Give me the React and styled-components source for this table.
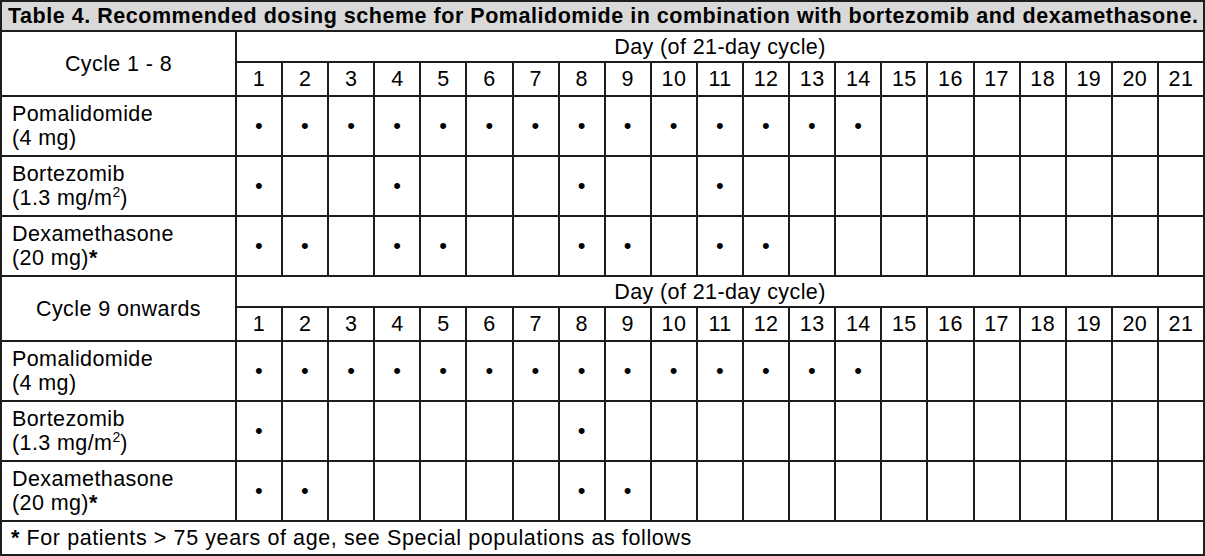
import React from "react";
import styled, { createGlobalStyle } from "styled-components";

const Global = createGlobalStyle`
  html, body { margin: 0; padding: 0; background: #fff; }
  body { font-family: "Liberation Sans", Arial, sans-serif; color: #000; }
`;

const Table = styled.table`
  width: 1205px;
  border-collapse: collapse;
  table-layout: fixed;
  font-size: 21.5px;
  line-height: 24px;
  letter-spacing: 0.4px;
`;

const TitleCell = styled.th`
  background: #d9d9d9;
  border: 2px solid #1e1e1e;
  font-weight: bold;
  text-align: left;
  padding: 0 6px;
  height: 28px;
  font-size: 21.5px;
  letter-spacing: 0.53px;
  white-space: nowrap;
`;

const Cell = styled.td`
  border: 2px solid #1e1e1e;
  padding: 0;
  text-align: center;
  vertical-align: middle;
  height: ${(p) => p.$h || 30}px;
  white-space: nowrap;
`;

const CycleCell = styled(Cell)`
  text-align: center;
`;

const DrugCell = styled(Cell)`
  text-align: left;
  padding: 0 10px;
`;

const FootCell = styled(Cell)`
  text-align: left;
  padding: 0 9px;
  letter-spacing: 0.6px;
`;

const Sup = styled.sup`
  font-size: 14px;
  line-height: 0;
  vertical-align: 8px;
  letter-spacing: 0;
`;

const Star = styled.span`
  font-weight: bold;
`;

const Dot = styled.span`
  font-size: 22px;
`;

const days = Array.from({ length: 21 }, (_, i) => i + 1);

const section1 = [
  { name: "Pomalidomide", dose: "(4 mg)", days: [1,2,3,4,5,6,7,8,9,10,11,12,13,14] },
  { name: "Bortezomib", dose: <>(1.3 mg/m<Sup>2</Sup>)</>, days: [1,4,8,11] },
  { name: "Dexamethasone", dose: <>(20 mg)<Star>*</Star></>, days: [1,2,4,5,8,9,11,12] },
];
const section2 = [
  { name: "Pomalidomide", dose: "(4 mg)", days: [1,2,3,4,5,6,7,8,9,10,11,12,13,14] },
  { name: "Bortezomib", dose: <>(1.3 mg/m<Sup>2</Sup>)</>, days: [1,8] },
  { name: "Dexamethasone", dose: <>(20 mg)<Star>*</Star></>, days: [1,2,8,9] },
];

function Section({ label, rows, numH }) {
  return (
    <>
      <tr>
        <CycleCell rowSpan={2} $h={30}>{label}</CycleCell>
        <Cell colSpan={21} $h={29}>Day (of 21-day cycle)</Cell>
      </tr>
      <tr>
        {days.map((d) => (
          <Cell key={d} $h={numH}>{d}</Cell>
        ))}
      </tr>
      {rows.map((r, i) => (
        <tr key={i}>
          <DrugCell $h={58}>
            {r.name}
            <br />
            {r.dose}
          </DrugCell>
          {days.map((d) => (
            <Cell key={d} $h={58}>{r.days.includes(d) ? <Dot>•</Dot> : null}</Cell>
          ))}
        </tr>
      ))}
    </>
  );
}

export default function App() {
  return (
    <>
      <Global />
      <Table>
        <colgroup>
          <col style={{ width: 235 }} />
          {days.map((d) => (
            <col key={d} />
          ))}
        </colgroup>
        <thead>
          <tr>
            <TitleCell colSpan={22}>
              Table 4. Recommended dosing scheme for Pomalidomide in combination with bortezomib and dexamethasone.
            </TitleCell>
          </tr>
        </thead>
        <tbody>
          <Section label="Cycle 1 - 8" rows={section1} numH={32} />
          <Section label="Cycle 9 onwards" rows={section2} numH={32} />
          <tr>
            <FootCell colSpan={22} $h={32}>
              <Star>*</Star> For patients &gt; 75 years of age, see Special populations as follows
            </FootCell>
          </tr>
        </tbody>
      </Table>
    </>
  );
}
